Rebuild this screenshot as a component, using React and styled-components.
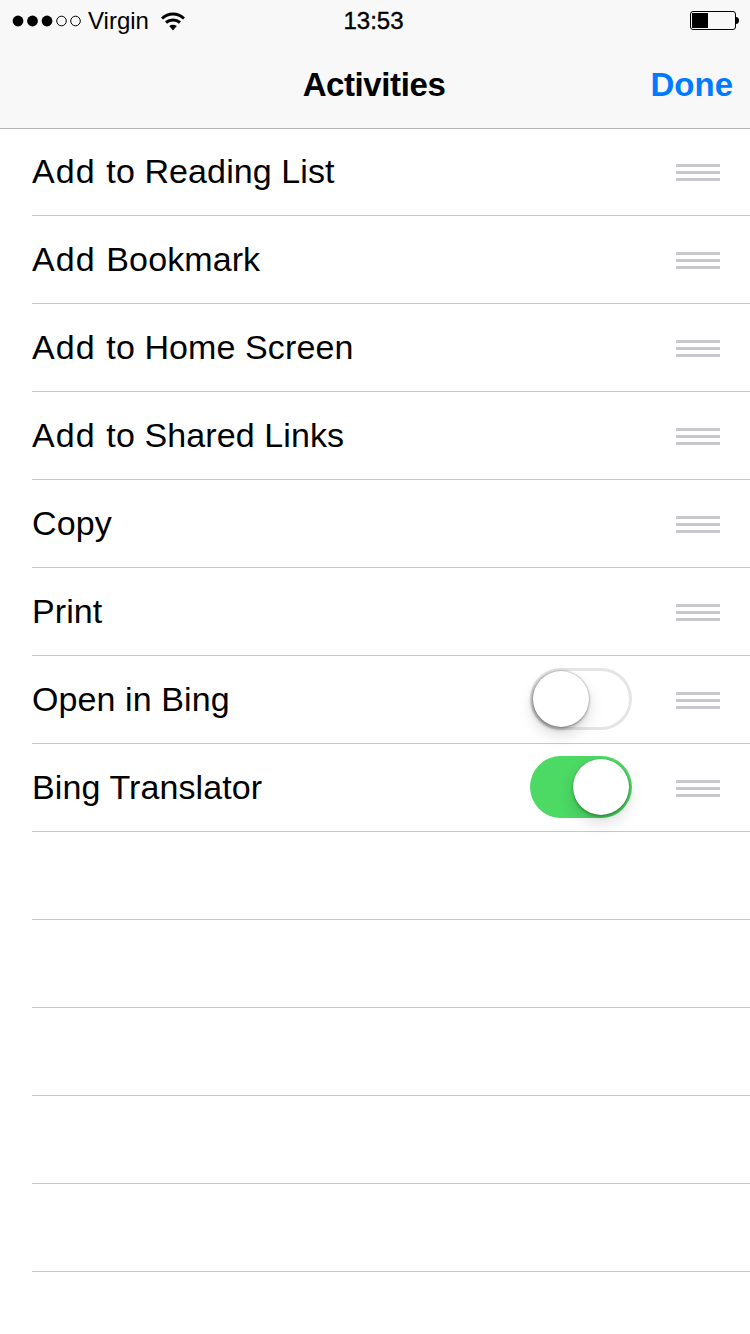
import React from "react";
import styled, { createGlobalStyle } from "styled-components";

const GlobalStyle = createGlobalStyle`
  html, body {
    margin: 0;
    padding: 0;
    background: #fff;
    font-family: "Liberation Sans", Arial, sans-serif;
    color: #000;
  }
`;

const Screen = styled.div`
  width: 750px;
  height: 1334px;
  overflow: hidden;
  background: #fff;
`;

const Header = styled.header`
  position: relative;
  z-index: 1;
  height: 128px;
  background: #f8f8f8;
  box-shadow: 0 1px 0 #b2b2b2;
  display: flex;
  flex-direction: column;
`;

const StatusBar = styled.div`
  height: 42px;
  padding: 0 11px 0 12px;
  display: grid;
  grid-template-columns: 1fr auto 1fr;
  align-items: center;
  font-size: 24px;
`;

const StatusLeft = styled.div`
  display: flex;
  align-items: center;
`;

const Carrier = styled.span`
  margin-left: 6px;
  margin-right: 12px;
`;

const Clock = styled.div`
  margin-right: 4px;
  -webkit-text-stroke: 0.4px #000;
`;

const StatusRight = styled.div`
  display: flex;
  justify-content: flex-end;
`;

const NavBar = styled.div`
  flex: 1;
  display: grid;
  grid-template-columns: 1fr auto 1fr;
  align-items: center;
  padding: 0 17px;
`;

const Title = styled.h1`
  grid-column: 2;
  margin: 0 2px 0 0;
  font-size: 33px;
  font-weight: 700;
  letter-spacing: -0.4px;
`;

const DoneButton = styled.button`
  justify-self: end;
  padding: 0;
  border: none;
  background: transparent;
  font: 700 33px "Liberation Sans", Arial, sans-serif;
  color: #007aff;
`;

const List = styled.ul`
  margin: 0;
  padding: 0;
  list-style: none;
`;

const Row = styled.li`
  height: 87px;
  margin-left: 32px;
  padding-right: 30px;
  border-bottom: 1px solid #c8c7cc;
  display: flex;
  align-items: center;
  font-size: 34px;
  letter-spacing: 0.1px;
`;

const Label = styled.span`
  flex: 1;
`;

// "Add" sets wider in the reference than the rest of the line
const Verb = styled.span`
  letter-spacing: 1.1px;
`;

const Toggle = styled.div`
  width: 102px;
  height: 62px;
  box-sizing: border-box;
  margin: 0 44px 1px 0;
  border-radius: 31px;
  position: relative;
  background: ${(p) => (p.$on ? "#4cd964" : "#fff")};
  border: ${(p) => (p.$on ? "none" : "3px solid #e5e5e5")};
`;

const Knob = styled.div`
  position: absolute;
  width: 56px;
  height: 56px;
  border-radius: 50%;
  background: #fff;
  top: ${(p) => (p.$on ? "3px" : "0")};
  left: ${(p) => (p.$on ? "43px" : "0")};
  box-shadow: ${(p) =>
    p.$on
      ? "0 0 1px rgba(0,0,0,0.4), 0 2px 3px rgba(0,60,0,0.35), 0 8px 16px rgba(0,0,0,0.14)"
      : "0 0 2px rgba(0,0,0,0.4), -1px 2px 4px rgba(0,0,0,0.35), 0 8px 16px rgba(0,0,0,0.14)"};
`;

const Grip = styled.div`
  width: 44px;
  display: flex;
  flex-direction: column;
  gap: 4px;
  margin-left: ${(p) => (p.$after ? "0" : "auto")};
  position: relative;
  top: 1px;
`;

const GripBar = styled.div`
  height: 3px;
  background: #c7c7cc;
`;

const SignalDots = () => (
  <svg width="70" height="14" viewBox="0 0 70 14">
    {[6, 20.5, 35].map((cx) => (
      <circle key={cx} cx={cx} cy="7" r="5.4" fill="#000" />
    ))}
    {[49.5, 63.5].map((cx) => (
      <circle key={cx} cx={cx} cy="7" r="4.8" fill="none" stroke="#000" strokeWidth="1" />
    ))}
  </svg>
);

const Wifi = () => (
  <svg width="24" height="19" viewBox="0 0 24 19">
    <path d="M1 6.5C7.5 0.5 16.5 0.5 23 6.5" fill="none" stroke="#000" strokeWidth="3" />
    <path d="M5 10.5C9 7 15 7 19 10.5" fill="none" stroke="#000" strokeWidth="3" />
    <path d="M8.2 14C10.5 12.2 13.5 12.2 15.8 14L12 18.5Z" fill="#000" />
  </svg>
);

const Battery = () => (
  <svg width="49" height="20" viewBox="0 0 49 20">
    <rect x="0.5" y="0.5" width="45" height="18" rx="2.5" fill="none" stroke="#000" />
    <rect x="2" y="2" width="16" height="15" fill="#000" />
    <path d="M46 6C48 6 49 7.5 49 9.5C49 11.5 48 13 46 13Z" fill="#000" />
  </svg>
);

const rows = [
  { verb: "Add", label: "to Reading List" },
  { verb: "Add", label: "Bookmark" },
  { verb: "Add", label: "to Home Screen" },
  { verb: "Add", label: "to Shared Links" },
  { label: "Copy" },
  { label: "Print" },
  { label: "Open in Bing", toggle: "off" },
  { label: "Bing Translator", toggle: "on" },
  {},
  {},
  {},
  {},
  {},
  {},
];

export default function App() {
  return (
    <Screen>
      <GlobalStyle />
      <Header>
        <StatusBar>
          <StatusLeft>
            <SignalDots />
            <Carrier>Virgin</Carrier>
            <Wifi />
          </StatusLeft>
          <Clock>13:53</Clock>
          <StatusRight>
            <Battery />
          </StatusRight>
        </StatusBar>
        <NavBar>
          <Title>Activities</Title>
          <DoneButton>Done</DoneButton>
        </NavBar>
      </Header>
      <List>
        {rows.map((row, i) => (
          <Row key={i}>
            {row.label && (
              <Label>
                {row.verb && <Verb>{row.verb} </Verb>}
                {row.label}
              </Label>
            )}
            {row.toggle && (
              <Toggle $on={row.toggle === "on"}>
                <Knob $on={row.toggle === "on"} />
              </Toggle>
            )}
            {row.label && (
              <Grip $after={!!row.toggle}>
                <GripBar />
                <GripBar />
                <GripBar />
              </Grip>
            )}
          </Row>
        ))}
      </List>
    </Screen>
  );
}
